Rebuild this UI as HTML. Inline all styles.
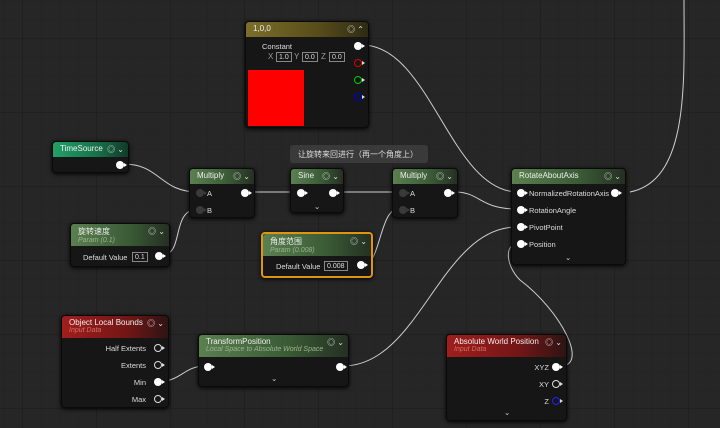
<!DOCTYPE html>
<html><head><meta charset="utf-8"><style>
*{margin:0;padding:0;box-sizing:border-box}
body{width:720px;height:428px;overflow:hidden;background:#262626;font-family:"Liberation Sans","Noto Sans CJK SC",sans-serif;color:#ddd;position:relative;
background-image:linear-gradient(90deg,#202020 1px,transparent 1px),linear-gradient(#202020 1px,transparent 1px),linear-gradient(90deg,#242424 1px,transparent 1px),linear-gradient(#242424 1px,transparent 1px);
background-size:74px 74px,74px 74px,18.5px 18.5px,18.5px 18.5px;background-position:22px 38px,22px 38px,22px 38px,22px 38px}
.n{position:absolute;background:#151615;border-radius:4px;box-shadow:0 1px 4px #000;border:1px solid #0a0a0a}
.h{height:15px;border-radius:3px 3px 0 0;font-size:8px;color:#eee;padding:2px 0 0 7px;position:relative;white-space:nowrap}
.h i{position:absolute;right:4px;top:2px;font-style:normal;font-size:8px;color:#ddd}
.g{background:linear-gradient(90deg,#5a8050,#3a5a35 60%,#253023)}
.sub{font-style:italic;font-size:7px;color:#9bb38e;display:block;margin-top:0}
.t{position:absolute;font-size:7.5px;color:#ddd;white-space:nowrap}
.p{position:absolute;width:8px;height:8px;border-radius:50%;background:#fff}
.p:after{content:"";position:absolute;right:-3px;top:2px;border-left:3px solid #fff;border-top:2px solid transparent;border-bottom:2px solid transparent}
.o{background:none;border:1.5px solid #ddd}
.o:after{border-left-color:#ddd;right:-4px;top:1px}
.d{background:#3a3a3a}.d:after{border-left-color:#3a3a3a}
.box{position:absolute;border:1px solid #888;font-size:7px;padding:0 2px;height:10px;line-height:9px;color:#ddd}
.c{position:absolute;font-size:8px;color:#999}
</style></head><body>
<svg width="720" height="428" style="position:absolute;left:0;top:0" fill="none" stroke="#cfcfcf" stroke-width="1">
<path d="M362 45 C430 45,450 190,517 192"/>
<path d="M630 192 C690 180,684 80,684 0"/>
<path d="M124 164 C160 164,160 192,198 192"/>
<path d="M162 255 C185 255,170 210,198 209"/>
<path d="M250 192 L296 192"/>
<path d="M340 192 L398 192"/>
<path d="M364 265 C380 265,380 209,398 209"/>
<path d="M455 192 C480 192,480 209,517 209"/>
<path d="M343 366 C420 366,440 227,517 227"/>
<path d="M162 381 C180 381,185 366,205 366"/>
<path d="M560 366 C590 366,560 310,520 280 C505 265,505 244,517 244"/>
</svg>

<!-- Constant -->
<div class="n" style="left:245px;top:21px;width:124px;height:107px">
<div class="h" style="background:linear-gradient(90deg,#7c6e2a,#574c1a 60%,#2e2b14)">1,0,0<i>◎ ⌃</i></div>
<div class="t" style="left:16px;top:20px">Constant</div>
<div class="c" style="left:22px;top:30px">X</div><div class="box" style="left:30px;top:30px">1.0</div>
<div class="c" style="left:48px;top:30px">Y</div><div class="box" style="left:56px;top:30px">0.0</div>
<div class="c" style="left:75px;top:30px">Z</div><div class="box" style="left:83px;top:30px">0.0</div>
<div style="position:absolute;left:2px;top:48px;width:56px;height:56px;background:#f00"></div>
<div class="p" style="left:108px;top:20px"></div>
<div class="p o" style="left:108px;top:37px;border-color:#d00"></div>
<div class="p o" style="left:108px;top:54px;border-color:#0c0"></div>
<div class="p o" style="left:108px;top:71px;border-color:#00d"></div>
</div>

<!-- comment -->
<div style="position:absolute;left:290px;top:145px;width:138px;height:18px;background:#3a3a3a;border-radius:3px;font-size:8px;color:#ddd;padding:4px 0 0 8px">让旋转来回进行（再一个角度上）</div>

<!-- TimeSource -->
<div class="n" style="left:52px;top:141px;width:77px;height:32px">
<div class="h" style="background:linear-gradient(90deg,#23a068,#17704a 60%,#123a28)">TimeSource<i>◎ ⌄</i></div>
<div class="p" style="left:63px;top:19px"></div></div>

<!-- Multiply1 -->
<div class="n" style="left:189px;top:168px;width:66px;height:50px">
<div class="h g">Multiply<i>◎ ⌄</i></div>
<div class="p d" style="left:6px;top:20px"></div><div class="t" style="left:17px;top:20px">A</div>
<div class="p d" style="left:6px;top:37px"></div><div class="t" style="left:17px;top:37px">B</div>
<div class="p" style="left:51px;top:20px"></div></div>

<!-- Sine -->
<div class="n" style="left:290px;top:168px;width:54px;height:45px">
<div class="h g">Sine<i>◎ ⌄</i></div>
<div class="p" style="left:6px;top:20px"></div><div class="p" style="left:38px;top:20px"></div>
<div class="t" style="left:23px;top:33px">⌄</div></div>

<!-- Multiply2 -->
<div class="n" style="left:392px;top:168px;width:66px;height:50px">
<div class="h g">Multiply<i>◎ ⌄</i></div>
<div class="p d" style="left:6px;top:20px"></div><div class="t" style="left:17px;top:20px">A</div>
<div class="p d" style="left:6px;top:37px"></div><div class="t" style="left:17px;top:37px">B</div>
<div class="p" style="left:51px;top:20px"></div></div>

<!-- RotateAboutAxis -->
<div class="n" style="left:511px;top:168px;width:115px;height:97px">
<div class="h g">RotateAboutAxis<i>◎ ⌄</i></div>
<div class="p" style="left:5px;top:20px"></div><div class="t" style="left:17px;top:20px">NormalizedRotationAxis</div>
<div class="p" style="left:99px;top:20px"></div>
<div class="p" style="left:5px;top:37px"></div><div class="t" style="left:17px;top:37px">RotationAngle</div>
<div class="p" style="left:5px;top:54px"></div><div class="t" style="left:17px;top:54px">PivotPoint</div>
<div class="p" style="left:5px;top:71px"></div><div class="t" style="left:17px;top:71px">Position</div>
<div class="t" style="left:53px;top:84px">⌄</div></div>

<!-- 旋转速度 -->
<div class="n" style="left:70px;top:223px;width:100px;height:44px">
<div class="h g" style="height:22px">旋转速度<span class="sub">Param (0.1)</span><i>◎ ⌄</i></div>
<div class="t" style="left:12px;top:29px">Default Value</div><div class="box" style="left:61px;top:28px">0.1</div>
<div class="p" style="left:84px;top:28px"></div></div>

<!-- 角度范围 -->
<div class="n" style="left:261px;top:232px;width:112px;height:46px;border:2px solid #e0940f">
<div class="h g" style="height:22px">角度范围<span class="sub">Param (0.008)</span><i>◎ ⌄</i></div>
<div class="t" style="left:13px;top:28px">Default Value</div><div class="box" style="left:61px;top:27px">0.008</div>
<div class="p" style="left:94px;top:27px"></div></div>

<!-- Object Local Bounds -->
<div class="n" style="left:61px;top:315px;width:108px;height:93px">
<div class="h" style="height:22px;background:linear-gradient(90deg,#a01e1e,#741616 60%,#2e1414)">Object Local Bounds<span class="sub" style="color:#d07060">Input Data</span><i>◎ ⌄</i></div>
<div class="t" style="right:22px;top:28px">Half Extents</div><div class="p o" style="left:92px;top:28px"></div>
<div class="t" style="right:22px;top:45px">Extents</div><div class="p o" style="left:92px;top:45px"></div>
<div class="t" style="right:22px;top:62px">Min</div><div class="p" style="left:92px;top:62px"></div>
<div class="t" style="right:22px;top:79px">Max</div><div class="p o" style="left:92px;top:79px"></div></div>

<!-- TransformPosition -->
<div class="n" style="left:198px;top:334px;width:151px;height:53px">
<div class="h g" style="height:22px">TransformPosition<span class="sub">Local Space to Absolute World Space</span><i>◎ ⌄</i></div>
<div class="p" style="left:5px;top:28px"></div><div class="p" style="left:137px;top:28px"></div>
<div class="t" style="left:72px;top:39px">⌄</div></div>

<!-- Absolute World Position -->
<div class="n" style="left:446px;top:334px;width:121px;height:87px">
<div class="h" style="height:22px;background:linear-gradient(90deg,#a01e1e,#741616 60%,#2e1414)">Absolute World Position<span class="sub" style="color:#d07060">Input Data</span><i>◎ ⌄</i></div>
<div class="t" style="right:17px;top:28px">XYZ</div><div class="p" style="left:105px;top:28px"></div>
<div class="t" style="right:17px;top:45px">XY</div><div class="p o" style="left:105px;top:45px"></div>
<div class="t" style="right:17px;top:62px">Z</div><div class="p o" style="left:105px;top:62px;border-color:#22f"></div>
<div class="t" style="left:57px;top:73px">⌄</div></div>
</body></html>
